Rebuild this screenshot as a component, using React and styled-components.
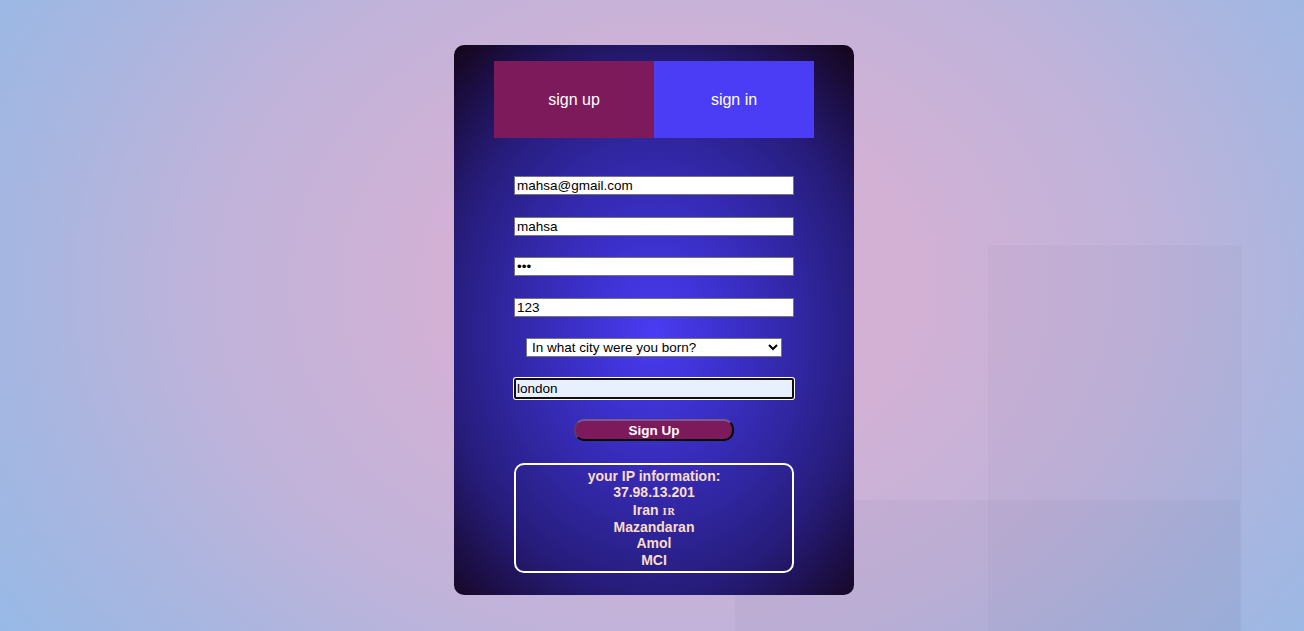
import React, { useState } from 'react'
import styled, { createGlobalStyle } from 'styled-components'

const GlobalStyle = createGlobalStyle`
    html, body {
        margin: 0;
        padding: 0;
    }
    body {
        min-height: 631px;
        font-family: "Liberation Sans", Arial, sans-serif;
        background:
            linear-gradient(rgba(40, 40, 80, 0.03), rgba(40, 40, 80, 0.03)) no-repeat 988px 245px / 254px 386px,
            linear-gradient(rgba(40, 40, 80, 0.04), rgba(40, 40, 80, 0.04)) no-repeat 735px 500px / 505px 131px,
            radial-gradient(ellipse 62% 100% at 52% 45%, #d8b0d2 0%, #d2b1d5 30%, #c0b3da 58%, #a8b6e0 80%, #98b9e6 100%);
    }
`

const Page = styled.div`
    display: flex;
    justify-content: center;
    padding: 45px 0 0 4px;
    height: 586px;
`

const Card = styled.div`
    width: 400px;
    height: 550px;
    box-sizing: border-box;
    padding: 16px 40px 0;
    border-radius: 10px;
    background: radial-gradient(ellipse 75% 68% at 50% 52%, #4a3cf2 0%, #3c30cc 25%, #3026a0 50%, #261c7a 70%, #1c0e44 88%, #15061c 100%);
`

const Tabs = styled.div`
    display: flex;
    height: 77px;
`

const Tab = styled.button`
    flex: 1;
    border: none;
    margin: 0;
    padding: 0;
    font-family: "Liberation Sans", Arial, sans-serif;
    font-size: 16px;
    color: #ffffff;
    background: ${p => (p.$active ? '#7d1a5c' : '#4b3cf6')};
    cursor: pointer;
`

const Form = styled.form`
    display: flex;
    flex-direction: column;
    align-items: center;
    padding: 38px 20px 0;
`

const Field = styled.input`
    box-sizing: border-box;
    width: 280px;
    height: 19px;
    margin: 0 0 21.5px;
    padding: 0 2px;
    border: 1px solid #767676;
    background: #ffffff;
    font-family: "Liberation Sans", Arial, sans-serif;
    font-size: 13.5px;
    color: #000;
    outline: none;
`

const FocusField = styled(Field)`
    height: 21px;
    margin-bottom: 20px;
    border: 2px solid #101010;
    border-radius: 2px;
    background: #e8f0fe;
    box-shadow: 0 0 0 1px #ffffff;
    padding: 0 1px;
`

const Select = styled.select`
    box-sizing: border-box;
    width: 256px;
    height: 19px;
    margin: 0 0 21px;
    padding: 0 1px;
    border: 1px solid #767676;
    border-radius: 0;
    background: #ffffff;
    font-family: "Liberation Sans", Arial, sans-serif;
    font-size: 13.5px;
    color: #000;
`

const SubmitButton = styled.button`
    box-sizing: border-box;
    width: 160px;
    height: 22px;
    margin: 0 0 22px;
    padding: 0;
    border: 2px outset #5a3a6a;
    border-top-color: #7a5a8a;
    border-bottom-color: #1a0a20;
    border-right-color: #1a0a20;
    border-radius: 10px;
    background: #7d1a5c;
    color: #ffffff;
    font-family: "Liberation Sans", Arial, sans-serif;
    font-size: 13.5px;
    font-weight: bold;
`

const InfoBox = styled.div`
    box-sizing: border-box;
    width: 280px;
    height: 110px;
    padding: 3px 0 0;
    border: 2px solid #ffffff;
    border-radius: 10px;
    display: flex;
    flex-direction: column;
    align-items: center;
    color: #fadcc6;
    font-size: 14px;
    font-weight: bold;
    line-height: 16.4px;
`

const InfoLine = styled.div`
    white-space: nowrap;
    height: ${p => (p.$tall ? '18px' : 'auto')};
    line-height: ${p => (p.$tall ? '19px' : '16.4px')};
`

const Flag = styled.span`
    font-size: 9px;
    line-height: 0;
    letter-spacing: 0.5px;
    margin-left: 4px;
    font-family: "DejaVu Serif", serif;
`

export default function App() {
    const [mode, setMode] = useState('up')

    return (
        <>
            <GlobalStyle />
            <Page>
                <Card>
                    <Tabs>
                        <Tab type="button" $active onClick={() => setMode('up')}>sign up</Tab>
                        <Tab type="button" onClick={() => setMode('in')}>sign in</Tab>
                    </Tabs>
                    <Form onSubmit={e => e.preventDefault()} data-mode={mode}>
                        <Field type="email" defaultValue="mahsa@gmail.com" />
                        <Field type="text" defaultValue="mahsa" />
                        <Field type="password" defaultValue="123" />
                        <Field type="text" defaultValue="123" />
                        <Select defaultValue="city">
                            <option value="city">In what city were you born?</option>
                            <option value="pet">What was your first pet's name?</option>
                        </Select>
                        <FocusField type="text" defaultValue="london" />
                        <SubmitButton type="submit">Sign Up</SubmitButton>
                        <InfoBox>
                            <InfoLine>your IP information:</InfoLine>
                            <InfoLine>37.98.13.201</InfoLine>
                            <InfoLine $tall>Iran<Flag>IR</Flag></InfoLine>
                            <InfoLine>Mazandaran</InfoLine>
                            <InfoLine>Amol</InfoLine>
                            <InfoLine>MCI</InfoLine>
                        </InfoBox>
                    </Form>
                </Card>
            </Page>
        </>
    )
}
